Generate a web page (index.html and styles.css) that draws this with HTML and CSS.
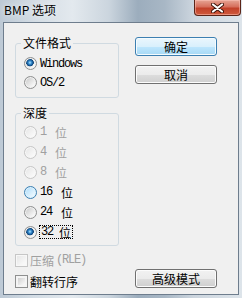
FILE: index.html
```html
<!DOCTYPE html>
<html lang="zh-CN">
<head>
    <meta charset="UTF-8">
    <title>BMP 选项</title>
    <meta name="viewport" content="width=device-width, initial-scale=1.0">
    <link rel="stylesheet" href="styles.css">
</head>
<body>

<div class="window">
    <div class="titlebar">
        <div class="title">BMP 选项</div>
        <button class="close" title="关闭">
            <svg width="13" height="10" viewBox="0 0 13 10">
                <path d="M2 1.5 L11 8.5 M11 1.5 L2 8.5" stroke="#3d1208" stroke-width="4" stroke-linecap="round"/>
                <path d="M2 1.5 L11 8.5 M11 1.5 L2 8.5" stroke="#fff" stroke-width="2.2" stroke-linecap="round"/>
            </svg>
        </button>
    </div>

    <div class="frame">
        <div class="client">
            <div class="left">
                <fieldset class="group format">
                    <legend>文件格式</legend>
                    <label class="opt"><input type="radio" name="fmt" class="radio" checked><span class="lat">Windows</span></label>
                    <label class="opt"><input type="radio" name="fmt" class="radio"><span class="lat">OS/2</span></label>
                </fieldset>

                <fieldset class="group depth">
                    <legend>深度</legend>
                    <label class="opt off"><input type="radio" name="bits" class="radio" disabled><span class="lat">1&nbsp;</span>位</label>
                    <label class="opt off"><input type="radio" name="bits" class="radio" disabled><span class="lat">4&nbsp;</span>位</label>
                    <label class="opt off"><input type="radio" name="bits" class="radio" disabled><span class="lat">8&nbsp;</span>位</label>
                    <label class="opt"><input type="radio" name="bits" class="radio hot"><span class="lat">16&nbsp;</span>位</label>
                    <label class="opt"><input type="radio" name="bits" class="radio"><span class="lat">24&nbsp;</span>位</label>
                    <label class="opt"><input type="radio" name="bits" class="radio" checked><span class="focus"><span class="lat">32&nbsp;</span>位</span></label>
                </fieldset>

                <label class="check off"><input type="checkbox" class="box" disabled>压缩<span class="lat">(RLE)</span></label>
                <label class="check"><input type="checkbox" class="box">翻转行序</label>
            </div>

            <div class="right">
                <button class="btn ok">确定</button>
                <button class="btn cancel">取消</button>
                <button class="btn advanced">高级模式</button>
            </div>
        </div>
    </div>
</div>

</body>
</html>
```

FILE: styles.css
```css
:root {
    --face: #f0f0f0;
    --frame: #6e7d8d;
    --group: #d0dae1;
    --gray-text: #a0a0a0;
}

* {
    box-sizing: border-box;
}

body {
    margin: 0;
    font-family: "Noto Sans CJK SC", sans-serif;
    font-size: 12px;
    color: #000;
}

.window {
    width: 242px;
    height: 298px;
    display: flex;
    flex-direction: column;
    background: linear-gradient(to right, #bdc9d5 0%, #d3dce4 14%, #e3e9ee 30%, #cbd5de 45%, #9cadbd 57%, #a8b7c5 68%, #ccd5de 80%, #dde4ea 100%);
}

.titlebar {
    height: 22px;
    display: flex;
    justify-content: space-between;
    align-items: flex-start;
    padding: 0 1px 0 4px;
}

.title {
    line-height: 20px;
    text-shadow: 0 0 6px rgba(255, 255, 255, 0.9);
}

.close {
    width: 47px;
    height: 16px;
    padding: 0;
    border: 1px solid #5b2418;
    border-top: none;
    border-radius: 0 0 4px 4px;
    background: linear-gradient(#e6a595 0%, #d66f5c 45%, #c2412a 55%, #cf5a3c 100%);
    box-shadow: inset 0 0 0 1px rgba(255, 200, 190, 0.5);
    display: flex;
    align-items: center;
    justify-content: center;
}

.frame {
    flex: 1;
    padding: 0 3px 3px;
}

.client {
    height: 100%;
    border: 1px solid var(--frame);
    background-color: var(--face);
    display: grid;
    grid-template-columns: 104px 82px;
    column-gap: 16px;
    padding: 13px 0 2px 11px;
}

.left {
    display: flex;
    flex-direction: column;
}

.group {
    margin: 0;
    min-width: 0;
    border: 1px solid var(--group);
    border-radius: 3px;
    padding: 4px 8px 5px;
}

.group legend {
    padding: 0 2px;
    margin-left: -3px;
    line-height: 14px;
}

.depth {
    margin-top: 8px;
    padding-top: 2px;
    padding-bottom: 3px;
}

.opt,
.check {
    display: flex;
    align-items: center;
    gap: 3px;
    height: 20px;
}

.format .opt {
    height: 19px;
}

.check {
    gap: 2px;
}

.check:first-of-type {
    margin-top: 4px;
    margin-bottom: 1px;
}

.off {
    color: var(--gray-text);
}

.lat {
    font-family: "Liberation Mono", monospace;
    font-size: 12px;
    letter-spacing: -1.2px;
}

.focus {
    display: inline-flex;
    align-items: center;
    height: 14px;
    padding: 0 1px;
    margin-left: -1px;
    border: 1px dotted #000;
}

.radio,
.box {
    appearance: none;
    width: 13px;
    height: 13px;
    margin: 0;
    flex: none;
    border: 1px solid #8e8f8f;
    background: linear-gradient(135deg, #c4c4c4, #f6f6f6 75%);
    box-shadow: inset 0 0 0 1px #f2f2f2;
}

.radio {
    border-radius: 50%;
}

.radio:checked {
    background:
        radial-gradient(circle at 45% 42%, #b5e6ff 0, #3a8fd0 1.6px, #0d4a86 3.2px, #164a7a 3.6px, transparent 4px),
        linear-gradient(135deg, #c4c4c4, #f6f6f6 75%);
}

.radio.hot {
    border-color: #3c7fb1;
    background: linear-gradient(135deg, #a9dafa, #e8f6fe 75%);
    box-shadow: inset 0 0 0 1px #def2fd;
}

.radio:disabled,
.box:disabled {
    border-color: #c6c6c6;
    background: linear-gradient(135deg, #e4e4e4, #f8f8f8 75%);
    box-shadow: inset 0 0 0 1px #f7f7f7;
}

.box {
    box-shadow: inset 0 0 0 2px #f4f4f4;
}

.right {
    display: flex;
    flex-direction: column;
}

.btn {
    width: 82px;
    height: 19px;
    padding: 0;
    font-family: "Noto Sans CJK SC", sans-serif;
    font-size: 12px;
    line-height: 17px;
    color: #000;
    border: 1px solid #707070;
    border-radius: 3px;
    background: linear-gradient(#f2f2f2 0%, #ebebeb 50%, #dddddd 51%, #cfcfcf 100%);
    box-shadow: inset 0 0 0 1px #fcfcfc;
}

.ok {
    margin-top: 1px;
    border-color: #3c7fb1;
    background: linear-gradient(#eaf6fd 0%, #d9f0fc 50%, #bee6fd 51%, #a7d9f5 100%);
    box-shadow: inset 0 0 0 1px #f4fbfe;
}

.cancel {
    margin-top: 9px;
}

.advanced {
    margin-top: auto;
    margin-bottom: 4px;
}
```
